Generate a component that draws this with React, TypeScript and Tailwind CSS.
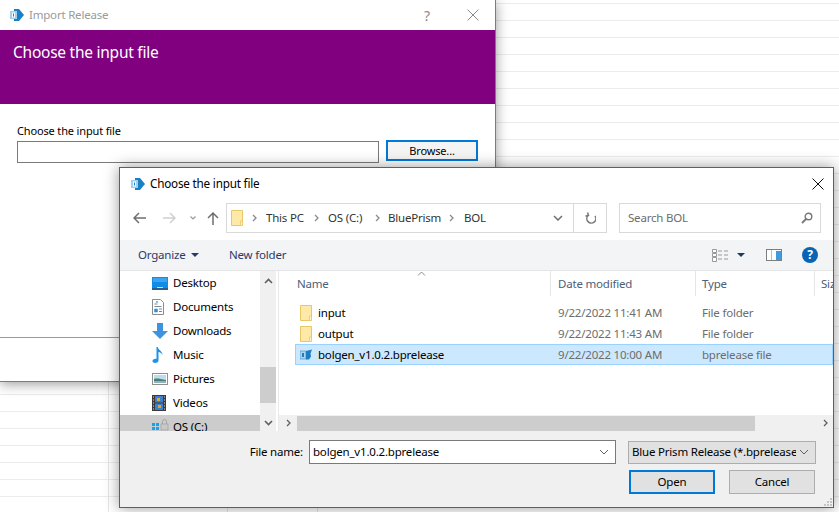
import React from "react";

// Blue Prism logo, title bars
const LogoIcon = () => (
  <svg width="16" height="14" viewBox="0 0 16 14">
    <path d="M5 1h5l5 6-5 6H5z" fill="#1b7fc4" />
    <rect x="1" y="3" width="7" height="8" fill="#9fd0f0" />
    <rect x="3" y="4.5" width="3" height="5" fill="#fff" />
    <rect x="4" y="5.5" width="1" height="3" fill="#1b7fc4" />
  </svg>
);

const BprFileIcon = () => (
  <svg width="13" height="12" viewBox="0 0 13 12">
    <rect x="0" y="2" width="6" height="8" fill="#a9d4f2" stroke="#3a87c4" strokeWidth="0.6" />
    <rect x="2" y="4" width="2" height="4" fill="#2a78b8" />
    <path d="M6 2l6-1.5-1.5 4 .5 3-2 3H6z" fill="#1b7fc4" />
  </svg>
);

const FolderIcon = ({ w = 12, h = 16 }: { w?: number; h?: number }) => (
  <svg width={w} height={h} viewBox="0 0 12 16">
    <path d="M.5.5h11v15H.5z" fill="#ffe9a8" stroke="#e8c765" />
    <path d="M9.5 11v4.5h2V11z" fill="#fff4cf" stroke="#e8c765" strokeWidth="0.8" />
  </svg>
);

const DesktopIcon = () => (
  <svg width="16" height="13" viewBox="0 0 16 13">
    <rect width="16" height="12" fill="#0f8be8" />
    <rect x="0" y="11" width="16" height="2" fill="#2b5d8c" />
    <rect x="5" y="10" width="6" height="1" fill="#bfe3ff" />
    <rect x="1" y="1" width="14" height="4" fill="#3aa4f2" />
  </svg>
);

const DocumentsIcon = () => (
  <svg width="12" height="16" viewBox="0 0 12 16">
    <path d="M.5.5h8l3 3v12H.5z" fill="#fff" stroke="#8c8c8c" />
    <path d="M2.5 5h3M2.5 7.5h7M7 10h3M7 12.5h3" stroke="#7a8794" />
    <path d="M4 3.5l1 -1.5 1 1.5M2.5 10h3v3h-3z" fill="#2f8fdc" stroke="#2f8fdc" strokeWidth="0.5" />
  </svg>
);

const DownloadsIcon = () => (
  <svg width="16" height="16" viewBox="0 0 16 16">
    <path d="M5 0h6v8h5l-8 8-8-8h5z" fill="#3f92de" />
  </svg>
);

const MusicIcon = () => (
  <svg width="12" height="16" viewBox="0 0 12 16">
    <path d="M4.5 0h1.3c.3 3 4.7 3.800 4.700 8-.7-1.800-2.400-2.800-4-3v8.500c0 1.500-1.500 2.500-3.300 2.500C1.500 16 .5 15.200.5 14c0-1.400 1.500-2.400 4-2.200z" fill="#1d93ec" />
  </svg>
);

const PicturesIcon = () => (
  <svg width="16" height="12" viewBox="0 0 16 12">
    <rect x="0.5" y="0.500" width="15" height="11" fill="#fff" stroke="#8f8f8f" />
    <rect x="2" y="2" width="12" height="8" fill="#bcdcf2" />
    <path d="M2 6c3-1 6 0 12 1v3H2z" fill="#4e7f6e" />
    <path d="M2 8h12v2H2z" fill="#8fb2c4" />
  </svg>
);

const VideosIcon = () => (
  <svg width="14" height="16" viewBox="0 0 14 16">
    <rect width="14" height="16" fill="#3a3a3a" />
    <rect x="3" y="1" width="8" height="6.500" fill="#3f7fd0" />
    <rect x="3" y="8.500" width="8" height="6.500" fill="#3f7fd0" />
    <rect x="5" y="3" width="3" height="3" fill="#e0a82e" />
    <rect x="6" y="10" width="3" height="3" fill="#e0a82e" />
    <path d="M1 2h1M1 5h1M1 8h1M1 11h1M1 14h1M12 2h1M12 5h1M12 8h1M12 11h1M12 14h1" stroke="#ddd" />
  </svg>
);

const DriveIcon = () => (
  <svg width="18" height="17" viewBox="0 0 18 17">
    <path d="M1 4h3v3H1zM5 4h3v3H5zM1 8h3v3H1zM5 8h3v3H5z" fill="#19a0ea" />
    <path d="M11.500 5V2.500a2 2 0 014 0V5" fill="none" stroke="#a4a4a4" />
    <rect x="10" y="5" width="7" height="6" fill="#c8c8c8" stroke="#9a9a9a" strokeWidth="0.6" />
    <rect x="1" y="13" width="16" height="3" fill="#444" />
  </svg>
);

const Chevron = ({ color = "#8a8a8a" }: { color?: string }) => (
  <svg className="shrink-0" width="5" height="8" viewBox="0 0 5 8">
    <path d="M1 1l3 3-3 3" fill="none" stroke={color} strokeWidth="1.300" />
  </svg>
);

const sidebarItems: [string, React.ReactNode][] = [
  ["Desktop", <DesktopIcon />],
  ["Documents", <DocumentsIcon />],
  ["Downloads", <DownloadsIcon />],
  ["Music", <MusicIcon />],
  ["Pictures", <PicturesIcon />],
  ["Videos", <VideosIcon />],
];

const crumbs = ["This PC", "OS (C:)", "BluePrism", "BOL"];

const ImportWindow = () => (
  <div className="absolute left-0 top-0 w-[496px] h-[382px] bg-white border-r border-b border-[#7c7c7c] shadow-[0_2px_12px_rgba(0,0,0,0.4)] flex flex-col">
    <div className="h-[30px] flex items-center pl-[9px] shrink-0">
      <LogoIcon />
      <span className="ml-[4px] text-[#9a9a9a]">Import Release</span>
      <span className="ml-auto mr-[37px] text-[14px] text-[#8a8a8a]">?</span>
      <svg className="mr-[16px]" width="12" height="12" viewBox="0 0 12 12">
        <path d="M.5.5l11 11M11.500.5l-11 11" stroke="#8a8a8a" />
      </svg>
    </div>
    <div className="h-[74px] bg-[#800080] pl-[13px] pt-[10px] text-[15.500px] tracking-[-0.25px] leading-[24px] text-white shrink-0">
      Choose the input file
    </div>
    <div className="pl-[17px] pt-[17px] flex-1">
      <div className="text-[11px] tracking-[-0.15px] leading-[19px] text-black">Choose the input file</div>
      <div className="flex items-start">
        <div className="mt-[1px] w-[362px] h-[22px] bg-white border border-[#7a7a7a]" />
        <button className="ml-[7px] w-[92px] h-[21px] border-2 border-[#0078d7] bg-[#f4f4f4] text-[11px] tracking-[-0.15px] leading-[15px] text-black">
          Browse...
        </button>
      </div>
    </div>
    <div className="h-[44px] border-t border-[#9a9a9a] shrink-0" />
  </div>
);

const FileRow = ({
  icon,
  name,
  date,
  type,
  selected,
}: {
  icon: React.ReactNode;
  name: string;
  date: string;
  type: string;
  selected?: boolean;
}) => (
  <div
    className={
      selected
        ? "h-[21px] flex items-center bg-[#cce8ff] border border-[#99d1ff]"
        : "h-[21px] flex items-center border border-transparent"
    }
  >
    <span className="w-[22px] pl-[4px] flex items-center shrink-0">{icon}</span>
    <span className="w-[234px] text-black shrink-0">{name}</span>
    <span className="w-[144px] pl-[6px] text-[#6d6d6d] shrink-0">{date}</span>
    <span className="pl-[6px] text-[#6d6d6d]">{type}</span>
  </div>
);

const FileDialog = () => (
  <div className="absolute left-[119px] top-[167px] w-[715px] h-[341px] bg-white border border-[#5f5f5f] shadow-[0_0_14px_rgba(0,0,0,0.4)] flex flex-col">
    {/* Title */}
    <div className="h-[35px] pb-[4px] flex items-center pl-[10px] shrink-0">
      <LogoIcon />
      <span className="ml-[4px] text-[11.700px] text-black">Choose the input file</span>
      <svg className="ml-auto mr-[9px]" width="12" height="12" viewBox="0 0 12 12">
        <path d="M.5.5l11 11M11.500.5l-11 11" stroke="#111" />
      </svg>
    </div>

    {/* Nav and address */}
    <div className="h-[30px] flex items-center shrink-0">
      <svg className="ml-[13px]" width="13" height="12" viewBox="0 0 13 12">
        <path d="M6 1L1 6l5 5M1 6h12" fill="none" stroke="#6f6f6f" strokeWidth="1.500" />
      </svg>
      <svg className="ml-[17px]" width="13" height="12" viewBox="0 0 13 12">
        <path d="M7 1l5 5-5 5M12 6H0" fill="none" stroke="#cfcfcf" strokeWidth="1.500" />
      </svg>
      <svg className="ml-[14px]" width="6" height="4" viewBox="0 0 6 4">
        <path d="M.5.5L3 3 5.500.5" fill="none" stroke="#9a9a9a" strokeWidth="1.200" />
      </svg>
      <svg className="ml-[11px]" width="12" height="13" viewBox="0 0 12 13">
        <path d="M1 6l5-5 5 5M6 1v12" fill="none" stroke="#6f6f6f" strokeWidth="1.500" />
      </svg>
      <div className="ml-[7px] w-[381px] h-[30px] border border-[#d9d9d9] flex items-center shrink-0">
        <span className="ml-[4px]">
          <FolderIcon />
        </span>
        <div className="w-[310px] flex items-center text-[#333] shrink-0">
          <span className="ml-[9px]">
            <Chevron />
          </span>
          <span className="ml-[9px] w-[48px] shrink-0">{crumbs[0]}</span>
          <Chevron />
          <span className="ml-[9px] w-[47px] shrink-0">{crumbs[1]}</span>
          <Chevron />
          <span className="ml-[8px] w-[61px] shrink-0">{crumbs[2]}</span>
          <Chevron />
          <span className="ml-[10px]">{crumbs[3]}</span>
        </div>
        <svg width="10" height="6" viewBox="0 0 10 6">
          <path d="M1 1l4 4 4-4" fill="none" stroke="#6f6f6f" strokeWidth="1.500" />
        </svg>
        <div className="ml-[10px] w-[33px] h-full border-l border-[#d9d9d9] flex items-center justify-center">
          <svg width="12" height="13" viewBox="0 0 12 13">
            <path d="M4 3.500a4.500 4.500 0 107 .5M3.500 .5l1 3-3 .5" fill="none" stroke="#7a7a7a" strokeWidth="1.500" />
          </svg>
        </div>
      </div>
      <div className="ml-[12px] w-[202px] h-[30px] border border-[#d9d9d9] flex items-center pl-[8px] pr-[7px] justify-between text-[#6d6d6d]">
        <span>Search BOL</span>
        <svg width="12" height="12" viewBox="0 0 12 12">
          <circle cx="7.500" cy="4.500" r="3.300" fill="none" stroke="#777" strokeWidth="1.400" />
          <path d="M5 7l-4 4" stroke="#777" strokeWidth="1.800" />
        </svg>
      </div>
    </div>

    <div className="h-[7px] shrink-0" />

    {/* Toolbar */}
    <div className="h-[30px] bg-[#f3f4f6] flex items-center text-[#2b3a67] shrink-0">
      <span className="ml-[18px] w-[48px]">Organize</span>
      <svg className="ml-[5px]" width="8" height="4" viewBox="0 0 8 4">
        <path d="M0 0h8L4 4z" fill="#2b3a67" />
      </svg>
      <span className="ml-[30px]">New folder</span>
      <svg className="ml-auto" width="16" height="13" viewBox="0 0 16 13">
        <path d="M.5.5h4v3h-4zM.5 4.500h4v3h-4zM.5 8.500h4v4h-4z" fill="#fff" stroke="#999" />
        <path d="M6 2h4M12 2h4M6 6h4M12 6h4M6 10h4M12 10h4" stroke="#999" />
      </svg>
      <svg className="ml-[9px]" width="8" height="4" viewBox="0 0 8 4">
        <path d="M0 0h8L4 4z" fill="#1f3a5f" />
      </svg>
      <svg className="ml-[21px]" width="16" height="12" viewBox="0 0 16 12">
        <rect x="0.500" y="0.500" width="15" height="11" fill="#fff" stroke="#7e7e7e" />
        <rect x="10" y="2" width="5" height="9" fill="#3f9be0" />
        <rect x="5" y="1" width="1" height="10" fill="#bdbdbd" />
      </svg>
      <span className="ml-[20px] mr-[15px] w-[16px] h-[16px] rounded-full bg-[#0a64b4] text-white text-[12px] font-bold leading-[16px] text-center">
        ?
      </span>
    </div>

    {/* Main */}
    <div className="h-[161px] border-t border-[#e5e5e5] flex shrink-0">
      <div className="w-[140px] overflow-hidden shrink-0">
        {sidebarItems.map(([label, icon]) => (
          <div key={label} className="h-[24px] flex items-center text-black">
            <span className="w-[53px] pl-[32px] flex justify-start items-center shrink-0">{icon}</span>
            <span>{label}</span>
          </div>
        ))}
        <div className="h-[24px] bg-[#cccccc] flex items-center text-black">
          <span className="w-[53px] pl-[31px] flex items-center shrink-0">
            <DriveIcon />
          </span>
          <span>OS (C:)</span>
        </div>
      </div>

      {/* Sidebar scrollbar */}
      <div className="w-[16px] bg-[#f0f0f0] flex flex-col items-center shrink-0">
        <svg className="mt-[7px]" width="9" height="6" viewBox="0 0 9 6">
          <path d="M1 5l3.500-3.500L8 5" fill="none" stroke="#606060" strokeWidth="1.600" />
        </svg>
        <div className="mt-[83px] w-full h-[36px] bg-[#cdcdcd]" />
        <svg className="mt-[17px]" width="9" height="6" viewBox="0 0 9 6">
          <path d="M1 1l3.500 3.500L8 1" fill="none" stroke="#606060" strokeWidth="1.600" />
        </svg>
      </div>

      <div className="w-[2px] shrink-0" />

      {/* File list */}
      <div className="flex-1 min-w-0 border-l border-[#e8e8e8] flex flex-col relative overflow-hidden">
        <svg className="absolute left-[138px] top-[0px]" width="9" height="5" viewBox="0 0 9 5">
          <path d="M1 4.500L4.500 1 8 4.500" fill="none" stroke="#8a8a8a" />
        </svg>
        <div className="h-[25px] flex text-[#4c607a] shrink-0">
          <div className="w-[272px] pl-[18px] leading-[25px] border-r border-[#e5e5e5] shrink-0">Name</div>
          <div className="w-[145px] pl-[7px] leading-[25px] border-r border-[#e5e5e5] shrink-0">Date modified</div>
          <div className="w-[119px] pl-[6px] leading-[25px] border-r border-[#e5e5e5] shrink-0">Type</div>
          <div className="pl-[6px] leading-[25px] shrink-0">Size</div>
        </div>
        <div className="pl-[16px] pt-[6px] flex-1">
          <FileRow icon={<FolderIcon />} name="input" date="9/22/2022 11:41 AM" type="File folder" />
          <FileRow icon={<FolderIcon />} name="output" date="9/22/2022 11:43 AM" type="File folder" />
          <FileRow icon={<BprFileIcon />} name="bolgen_v1.0.2.bprelease" date="9/22/2022 10:00 AM" type="bprelease file" selected />
        </div>
        <div className="h-[16px] bg-[#f0f0f0] flex items-center shrink-0">
          <span className="w-[18px] flex justify-center shrink-0">
            <Chevron color="#606060" />
          </span>
          <div className="w-[458px] h-[15px] bg-[#cdcdcd]" />
          <span className="ml-auto mr-[5px]">
            <Chevron color="#606060" />
          </span>
        </div>
      </div>
    </div>

    {/* Bottom */}
    <div className="flex-1 bg-[#f0f0f0] pt-[9px] pr-[17px] relative">
      <div className="flex items-center justify-end">
        <span className="text-black mr-[6px]">File name:</span>
        <div className="w-[307px] h-[24px] bg-white border border-[#7a7a7a] flex items-center justify-between pl-[3px] pr-[6px] text-black">
          <span>bolgen_v1.0.2.bprelease</span>
          <svg width="10" height="6" viewBox="0 0 10 6">
            <path d="M1 1l4 4 4-4" fill="none" stroke="#606060" />
          </svg>
        </div>
        <div className="ml-[12px] w-[188px] h-[23px] bg-[#e1e1e1] border border-[#adadad] flex items-center pl-[3px] pr-[6px] text-black">
          <span className="w-[164px] overflow-hidden whitespace-nowrap">Blue Prism Release (*.bprelease;*.bpr)</span>
          <svg className="ml-auto" width="10" height="6" viewBox="0 0 10 6">
            <path d="M1 1l4 4 4-4" fill="none" stroke="#606060" />
          </svg>
        </div>
      </div>
      <div className="mt-[6px] flex justify-end pr-[1px]">
        <button className="w-[86px] h-[24px] border-2 border-[#0078d7] bg-[#e1e1e1] leading-[18px] text-black">Open</button>
        <button className="ml-[14px] w-[86px] h-[24px] border border-[#adadad] bg-[#e1e1e1] leading-[20px] text-black">Cancel</button>
      </div>
      <svg className="absolute right-[1px] bottom-[1px]" width="9" height="9" viewBox="0 0 9 9">
        <path d="M7 1h2v2H7zM4 4h2v2H4zM7 4h2v2H7zM1 7h2v2H1zM4 7h2v2H4zM7 7h2v2H7z" fill="#c4c4c4" />
      </svg>
    </div>
  </div>
);

export default function App() {
  return (
    <div className="relative w-[839px] h-[512px] overflow-hidden bg-white text-[11.500px] tracking-[-0.2px] font-['Noto_Sans',sans-serif]">
      {/* Spreadsheet behind the windows */}
      <div className="absolute inset-0 bg-[repeating-linear-gradient(to_bottom,transparent_0,transparent_3px,#ececec_3px,#ececec_4px,transparent_4px,transparent_17px)]" />
      <div className="absolute left-[108px] top-[381px] bottom-0 w-px bg-[#e6e6e6]" />
      <div className="absolute left-[227px] top-[381px] bottom-0 w-px bg-[#e6e6e6]" />
      <div className="absolute left-[317px] top-[381px] bottom-0 w-px bg-[#e6e6e6]" />
      <ImportWindow />
      <FileDialog />
    </div>
  );
}
